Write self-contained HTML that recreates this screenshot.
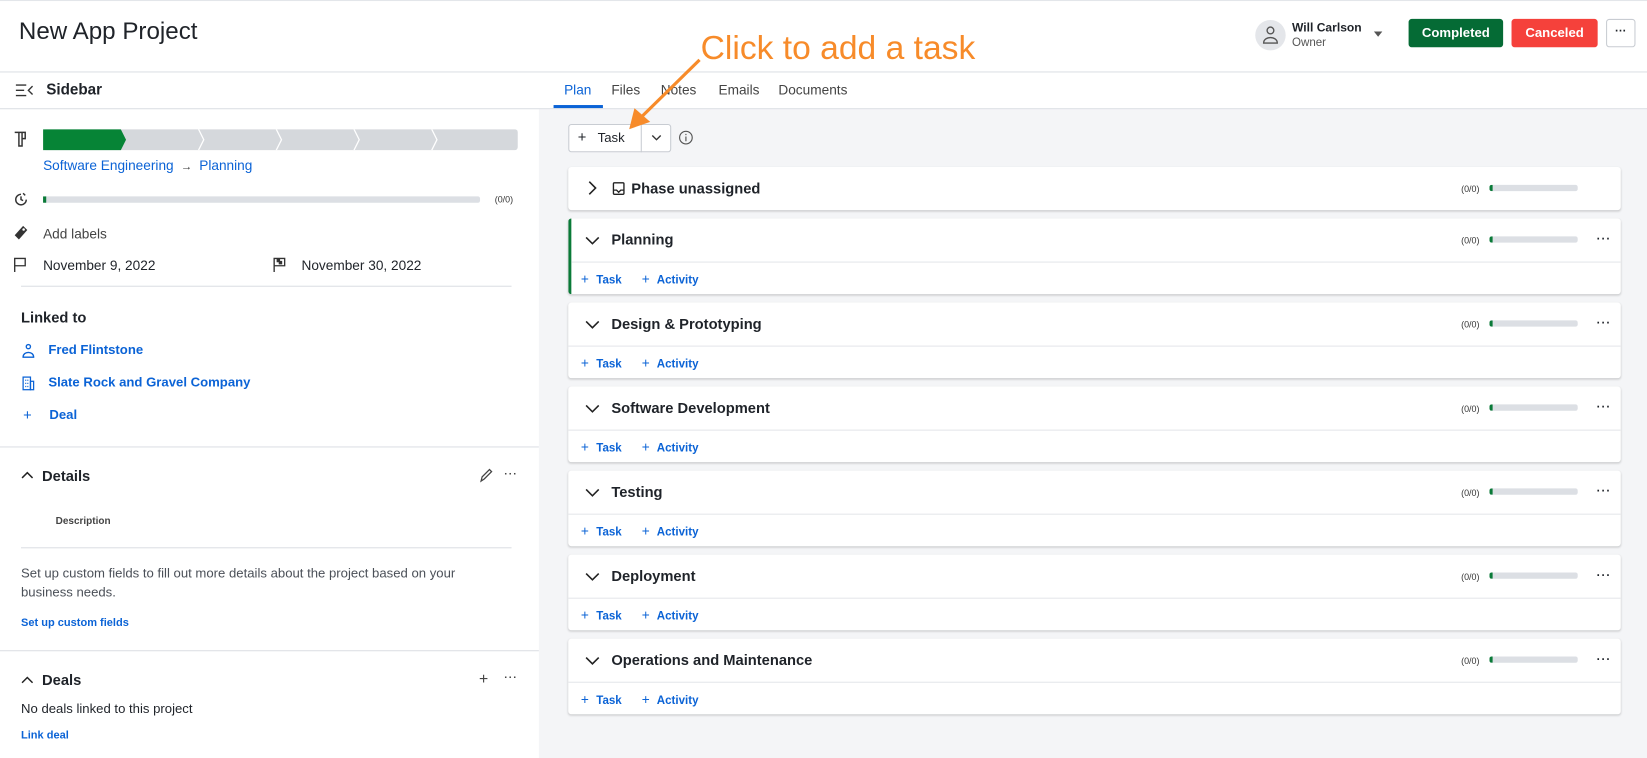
<!DOCTYPE html>
<html><head><meta charset="utf-8"><style>
*{box-sizing:border-box;margin:0;padding:0}
html,body{width:1647px;height:758px;overflow:hidden;background:#fff;font-family:"Liberation Sans",Arial,sans-serif;color:#1f2329}
#w{position:absolute;left:0;top:0;width:1568px;height:722px;transform:scale(1.0504);transform-origin:0 0;background:#fff}
.a{position:absolute;white-space:nowrap}
.blue{color:#0b63d6}
.b{font-weight:bold}
.hr{position:absolute;height:1px;background:#dcdfe4}
.card{position:absolute;left:541px;width:1002px;background:#fff;border-radius:3px;box-shadow:0 1px 2px rgba(0,0,0,.18)}
.card .t{position:absolute;left:41px;top:12px;font-size:14px;font-weight:bold}
.card .ch{position:absolute;left:16px;top:13px}
.card .c{position:absolute;left:850px;top:16px;font-size:8.5px;color:#333}
.card .bar{position:absolute;left:877px;top:17px;width:84px;height:6px;background:#dcdfe4;border-radius:2px;overflow:hidden}
.card .bar i{display:block;width:3px;height:6px;background:#0a7a38}
.card .d{position:absolute;left:979px;top:14px;font-size:11px;font-weight:bold;letter-spacing:1px}
.card .f{position:absolute;left:0;right:0;top:41px;border-top:1px solid #e4e6ea;height:31px;font-size:11px;font-weight:bold;color:#0b63d6}
.card .f span{position:absolute;top:8px}
.card .f b{font-size:13px;margin-right:4px;font-weight:normal}
</style></head><body><div id="w">
<div class="hr" style="left:0;top:0;width:1568px;background:#e3e6ea"></div>
<div class="a" style="left:18px;top:16px;font-size:23px;color:#1f2329">New App Project</div>
<div class="a" style="left:513px;top:104px;width:1055px;height:618px;background:#f4f5f7"></div>
<div class="a" style="left:667px;top:27px;font-size:32px;color:#f78b2a">Click to add a task</div>
<div class="a" style="left:1195px;top:19px;width:29px;height:29px;border-radius:50%;background:#e4e6ea"></div>
<svg class="a" style="left:1201px;top:24px" width="17" height="18" fill="none" stroke="#555" stroke-width="1.3"><circle cx="8.5" cy="5" r="3.2"/><path d="M2 17 C2 10 15 10 15 17 Z"/></svg>
<div class="a b" style="left:1230px;top:21px;font-size:11.5px">Will Carlson</div>
<div class="a" style="left:1230px;top:35px;font-size:11px;color:#555">Owner</div>
<div class="a" style="left:1308px;top:30px;border:4px solid transparent;border-top:5px solid #555"></div>
<div class="a b" style="left:1341px;top:18px;width:90px;height:27px;background:#056b35;color:#fff;border-radius:3px;font-size:12.5px;text-align:center;line-height:27px">Completed</div>
<div class="a b" style="left:1439px;top:18px;width:82px;height:27px;background:#f5413b;color:#fff;border-radius:3px;font-size:12.5px;text-align:center;line-height:27px">Canceled</div>
<div class="a b" style="left:1529px;top:18px;width:28px;height:27px;border:1px solid #c8ccd2;border-radius:3px;font-size:11px;text-align:center;line-height:22px">···</div>
<div class="hr" style="left:0;top:68px;width:1568px"></div>
<svg class="a" style="left:15px;top:80px" width="17" height="12" stroke="#333" stroke-width="1.3" fill="none"><path d="M0 1H10M0 6H8M0 11H10M16 2L12 6L16 10"/></svg>
<div class="a b" style="left:44px;top:78px;font-size:14.5px">Sidebar</div>
<div class="a blue" style="left:537px;top:78px;font-size:13px">Plan</div>
<div class="a" style="left:527px;top:100px;width:47px;height:3px;background:#0b63d6"></div>
<div class="a" style="left:582px;top:78px;font-size:13px;color:#444">Files</div>
<div class="a" style="left:629px;top:78px;font-size:13px;color:#444">Notes</div>
<div class="a" style="left:684px;top:78px;font-size:13px;color:#444">Emails</div>
<div class="a" style="left:741px;top:78px;font-size:13px;color:#444">Documents</div>
<div class="hr" style="left:0;top:103px;width:1568px"></div>
<svg class="a" style="left:13px;top:125px" width="12" height="15" fill="none" stroke="#333" stroke-width="1.4"><path d="M1 1H11V7H8V14H5V1M8 1V7"/></svg>
<svg class="a" style="left:41px;top:123px" width="452" height="20"><rect width="452" height="20" rx="3" fill="#d5d8dc"/><path d="M0 0H74L79 10L74 20H0Z" fill="#068436"/><g stroke="#fff" stroke-width="1.2" fill="none"><path d="M148 0L153 10L148 20M222 0L227 10L222 20M296 0L301 10L296 20M370 0L375 10L370 20"/></g></svg>
<div class="a blue" style="left:41px;top:150px;font-size:13px">Software Engineering <span style="color:#333;font-size:11px">&nbsp;→&nbsp;</span> Planning</div>
<svg class="a" style="left:13px;top:183px" width="14" height="14" fill="none" stroke="#333" stroke-width="1.4"><path d="M12 7A5 5 0 1 1 7 2M7 4V7L9 8M9 1L11 3"/></svg>
<div class="a" style="left:41px;top:187px;width:416px;height:6px;background:#dcdfe4;border-radius:2px"><div style="width:3px;height:6px;background:#0a7a38"></div></div>
<div class="a" style="left:471px;top:185px;font-size:8.5px;color:#333">(0/0)</div>
<svg class="a" style="left:13px;top:214px" width="14" height="15"><path d="M9 1L13 5L5 14L1 10Z" fill="#333"/><circle cx="9.5" cy="4.5" r="1.2" fill="#fff"/></svg>
<div class="a" style="left:41px;top:215px;font-size:13px;color:#444">Add labels</div>
<svg class="a" style="left:13px;top:245px" width="13" height="14" fill="none" stroke="#333" stroke-width="1.3"><path d="M1 14V1H11V8H1"/></svg>
<div class="a" style="left:41px;top:245px;font-size:13px">November 9, 2022</div>
<svg class="a" style="left:260px;top:245px" width="13" height="14" fill="none" stroke="#333" stroke-width="1.3"><path d="M1 14V1H11V8H1"/><path d="M4 2h2v2h2v2H6V4H4z" fill="#333"/></svg>
<div class="a" style="left:287px;top:245px;font-size:13px">November 30, 2022</div>
<div class="hr" style="left:20px;top:272px;width:467px"></div>
<div class="a b" style="left:20px;top:294px;font-size:14px">Linked to</div>
<svg class="a" style="left:21px;top:327px" width="12" height="14" fill="none" stroke="#0b63d6" stroke-width="1.3"><circle cx="6" cy="3" r="2"/><path d="M1 13C1 7 11 7 11 13Z"/></svg>
<div class="a b blue" style="left:46px;top:326px;font-size:12.5px">Fred Flintstone</div>
<svg class="a" style="left:21px;top:358px" width="12" height="14" fill="none" stroke="#0b63d6" stroke-width="1.2"><rect x="1" y="1" width="7" height="12"/><rect x="8" y="5" width="3" height="8"/><path d="M3 4h1M5 4h1M3 7h1M5 7h1M3 10h1M5 10h1"/></svg>
<div class="a b blue" style="left:46px;top:357px;font-size:12.5px">Slate Rock and Gravel Company</div>
<div class="a blue" style="left:22px;top:387px;font-size:14px">+</div>
<div class="a b blue" style="left:47px;top:388px;font-size:12.5px">Deal</div>
<div class="hr" style="left:0;top:425px;width:513px"></div>
<svg class="a" style="left:20px;top:448px" width="12" height="8" fill="none" stroke="#222" stroke-width="1.4"><path d="M1 7L6 2L11 7"/></svg>
<div class="a b" style="left:40px;top:445px;font-size:14px">Details</div>
<svg class="a" style="left:456px;top:446px" width="13" height="14" fill="none" stroke="#444" stroke-width="1.2"><path d="M2 12L3 8L10 1L12 3L5 10Z"/></svg>
<div class="a b" style="left:480px;top:446px;font-size:10px;color:#444;letter-spacing:1px">···</div>
<div class="a b" style="left:53px;top:491px;font-size:9.5px;color:#444">Description</div>
<div class="hr" style="left:20px;top:521px;width:467px"></div>
<div class="a" style="left:20px;top:537px;font-size:12.5px;color:#4b5058;line-height:18px">Set up custom fields to fill out more details about the project based on your<br>business needs.</div>
<div class="a b blue" style="left:20px;top:587px;font-size:10.5px">Set up custom fields</div>
<div class="hr" style="left:0;top:619px;width:513px"></div>
<svg class="a" style="left:20px;top:643px" width="12" height="8" fill="none" stroke="#222" stroke-width="1.4"><path d="M1 7L6 2L11 7"/></svg>
<div class="a b" style="left:40px;top:639px;font-size:14px">Deals</div>
<div class="a" style="left:456px;top:638px;font-size:15px;color:#444">+</div>
<div class="a b" style="left:480px;top:640px;font-size:10px;color:#444;letter-spacing:1px">···</div>
<div class="a" style="left:20px;top:668px;font-size:12.5px">No deals linked to this project</div>
<div class="a b blue" style="left:20px;top:694px;font-size:10.5px">Link deal</div>

<div class="a" style="left:541px;top:118px;width:98px;height:27px;background:#fff;border:1px solid #c8ccd2;border-radius:3px"></div>
<div class="a" style="left:610px;top:118px;width:1px;height:27px;background:#c8ccd2"></div>
<div class="a" style="left:550px;top:122px;font-size:14px">+</div>
<div class="a" style="left:569px;top:124px;font-size:12.5px">Task</div>
<svg class="a" style="left:620px;top:128px" width="10" height="6" fill="none" stroke="#333" stroke-width="1.3"><path d="M1 1L5 5L9 1"/></svg>
<svg class="a" style="left:646px;top:124px" width="14" height="14" fill="none" stroke="#555" stroke-width="1.1"><circle cx="7" cy="7" r="6"/><path d="M7 6V10.5M7 3.5V4.6"/></svg>

<div class="card" style="top:159px;height:41px">
<svg class="ch" width="10" height="14" fill="none" stroke="#222" stroke-width="1.5" style="left:18px"><path d="M2 1L8 7L2 13"/></svg>
<svg class="a" style="left:42px;top:14px" width="12" height="13" fill="none" stroke="#222" stroke-width="1.3"><rect x="1" y="1" width="10" height="11" rx="1"/><path d="M1 8H4L6 10L8 8H11"/></svg>
<div class="t" style="left:60px">Phase unassigned</div>
<div class="c">(0/0)</div><div class="bar"><i></i></div></div>

<div class="card" style="top:208px;height:72px;border-left:3px solid #0a7a38">
<svg class="ch" width="14" height="10" fill="none" stroke="#222" stroke-width="1.5" style="left:13px;top:16px"><path d="M1 2L7 8L13 2"/></svg>
<div class="t" style="left:38px">Planning</div><div class="c" style="left:847px">(0/0)</div><div class="bar" style="left:874px"><i></i></div><div class="d" style="left:976px">···</div>
<div class="f"><span style="left:9px"><b>+</b> Task</span><span style="left:67px"><b>+</b> Activity</span></div></div>

<div class="card" style="top:288px;height:72px">
<svg class="ch" width="14" height="10" fill="none" stroke="#222" stroke-width="1.5" style="top:16px"><path d="M1 2L7 8L13 2"/></svg>
<div class="t">Design &amp; Prototyping</div><div class="c">(0/0)</div><div class="bar"><i></i></div><div class="d">···</div>
<div class="f"><span style="left:12px"><b>+</b> Task</span><span style="left:70px"><b>+</b> Activity</span></div></div>

<div class="card" style="top:368px;height:72px">
<svg class="ch" width="14" height="10" fill="none" stroke="#222" stroke-width="1.5" style="top:16px"><path d="M1 2L7 8L13 2"/></svg>
<div class="t">Software Development</div><div class="c">(0/0)</div><div class="bar"><i></i></div><div class="d">···</div>
<div class="f"><span style="left:12px"><b>+</b> Task</span><span style="left:70px"><b>+</b> Activity</span></div></div>

<div class="card" style="top:448px;height:72px">
<svg class="ch" width="14" height="10" fill="none" stroke="#222" stroke-width="1.5" style="top:16px"><path d="M1 2L7 8L13 2"/></svg>
<div class="t">Testing</div><div class="c">(0/0)</div><div class="bar"><i></i></div><div class="d">···</div>
<div class="f"><span style="left:12px"><b>+</b> Task</span><span style="left:70px"><b>+</b> Activity</span></div></div>

<div class="card" style="top:528px;height:72px">
<svg class="ch" width="14" height="10" fill="none" stroke="#222" stroke-width="1.5" style="top:16px"><path d="M1 2L7 8L13 2"/></svg>
<div class="t">Deployment</div><div class="c">(0/0)</div><div class="bar"><i></i></div><div class="d">···</div>
<div class="f"><span style="left:12px"><b>+</b> Task</span><span style="left:70px"><b>+</b> Activity</span></div></div>

<div class="card" style="top:608px;height:72px">
<svg class="ch" width="14" height="10" fill="none" stroke="#222" stroke-width="1.5" style="top:16px"><path d="M1 2L7 8L13 2"/></svg>
<div class="t">Operations and Maintenance</div><div class="c">(0/0)</div><div class="bar"><i></i></div><div class="d">···</div>
<div class="f"><span style="left:12px"><b>+</b> Task</span><span style="left:70px"><b>+</b> Activity</span></div></div>

<svg class="a" style="left:590px;top:54px;z-index:5" width="80" height="75"><line x1="76" y1="3" x2="20" y2="58" stroke="#f78b2a" stroke-width="3"/><polygon points="9,69 14,49 29,62" fill="#f78b2a"/></svg>
</div></body></html>
